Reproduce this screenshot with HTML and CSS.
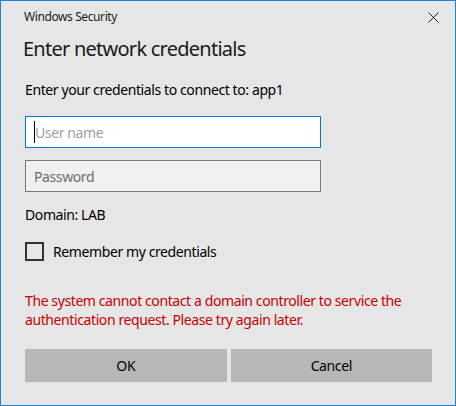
FILE: index.html
```html
<!DOCTYPE html>
<html lang="en">

<head>
    <meta charset="UTF-8">
    <title>Windows Security</title>
    <link rel="stylesheet" href="styles.css">
</head>

<body>
    <div class="dialog">
        <div class="titlebar">
            <span class="title">Windows Security</span>
            <span class="close">
                <svg width="11" height="11" viewBox="0 0 11 11">
                    <path d="M0.5 0.5 L10.5 10.5 M10.5 0.5 L0.5 10.5" stroke="#1a1a1a" stroke-width="1" fill="none"/>
                </svg>
            </span>
        </div>

        <div class="content">
            <h1>Enter network credentials</h1>
            <p class="prompt">Enter your credentials to connect to: app1</p>

            <div class="field focused">
                <span class="caret"></span>
                <span class="placeholder">User name</span>
            </div>
            <div class="field">
                <span class="placeholder">Password</span>
            </div>

            <p class="domain">Domain: LAB</p>

            <label class="remember">
                <span class="checkbox"></span>
                <span>Remember my credentials</span>
            </label>

            <p class="error">The system cannot contact a domain controller to service the authentication request. Please try again later.</p>

            <div class="buttons">
                <button class="button">OK</button>
                <button class="button">Cancel</button>
            </div>
        </div>
    </div>
</body>

</html>
```

FILE: styles.css
```css
body {
    margin: 0;
    font-family: 'Segoe UI', 'Noto Sans', sans-serif;
    color: #000;
}

.dialog {
    width: 456px;
    height: 406px;
    box-sizing: border-box;
    border: 1px solid #1883d7;
    background: #e6e6e6;
    display: flex;
    flex-direction: column;
}

.titlebar {
    height: 31px;
    display: flex;
    align-items: center;
    justify-content: space-between;
    padding: 0 16px 0 23px;
}

.title {
    font-size: 12px;
    letter-spacing: -0.4px;
    color: #1a1a1a;
}

.close {
    display: flex;
    margin-top: 1px;
}

.content {
    padding: 0 23px 0 24px;
    display: flex;
    flex-direction: column;
    letter-spacing: -0.4px;
}

h1 {
    margin: 3px 0 0 -2px;
    font-size: 20px;
    font-weight: 400;
    line-height: 28px;
    letter-spacing: -0.75px;
    color: #1a1a1a;
}

p {
    margin: 0;
    font-size: 14px;
    line-height: 19px;
}

.prompt {
    margin-top: 17px;
}

.field {
    width: 296px;
    height: 32px;
    box-sizing: border-box;
    border: 1px solid #7a7a7a;
    background: #f0f0f0;
    display: flex;
    align-items: center;
    padding-left: 8px;
    font-size: 14px;
    margin-top: 12px;
}

.field.focused {
    margin-top: 17px;
    border-color: #0078d7;
    background: #fff;
}

.placeholder {
    color: #6d6d6d;
}

.focused .placeholder {
    color: #a0a0a0;
}

.caret {
    width: 1px;
    height: 22px;
    background: #000;
}

.domain {
    margin-top: 13px;
}

.remember {
    display: flex;
    align-items: center;
    gap: 9px;
    margin-top: 18px;
    font-size: 14px;
}

.checkbox {
    width: 19px;
    height: 19px;
    box-sizing: border-box;
    border: 2px solid #333;
}

.error {
    margin-top: 30px;
    color: #c80000;
}

.buttons {
    display: flex;
    gap: 4px;
    margin-top: 20px;
}

.button {
    width: 202px;
    height: 33px;
    border: none;
    background: #b7b7b7;
    font-family: inherit;
    font-size: 14px;
    letter-spacing: -0.4px;
    color: #000;
    padding: 0;
}
```
